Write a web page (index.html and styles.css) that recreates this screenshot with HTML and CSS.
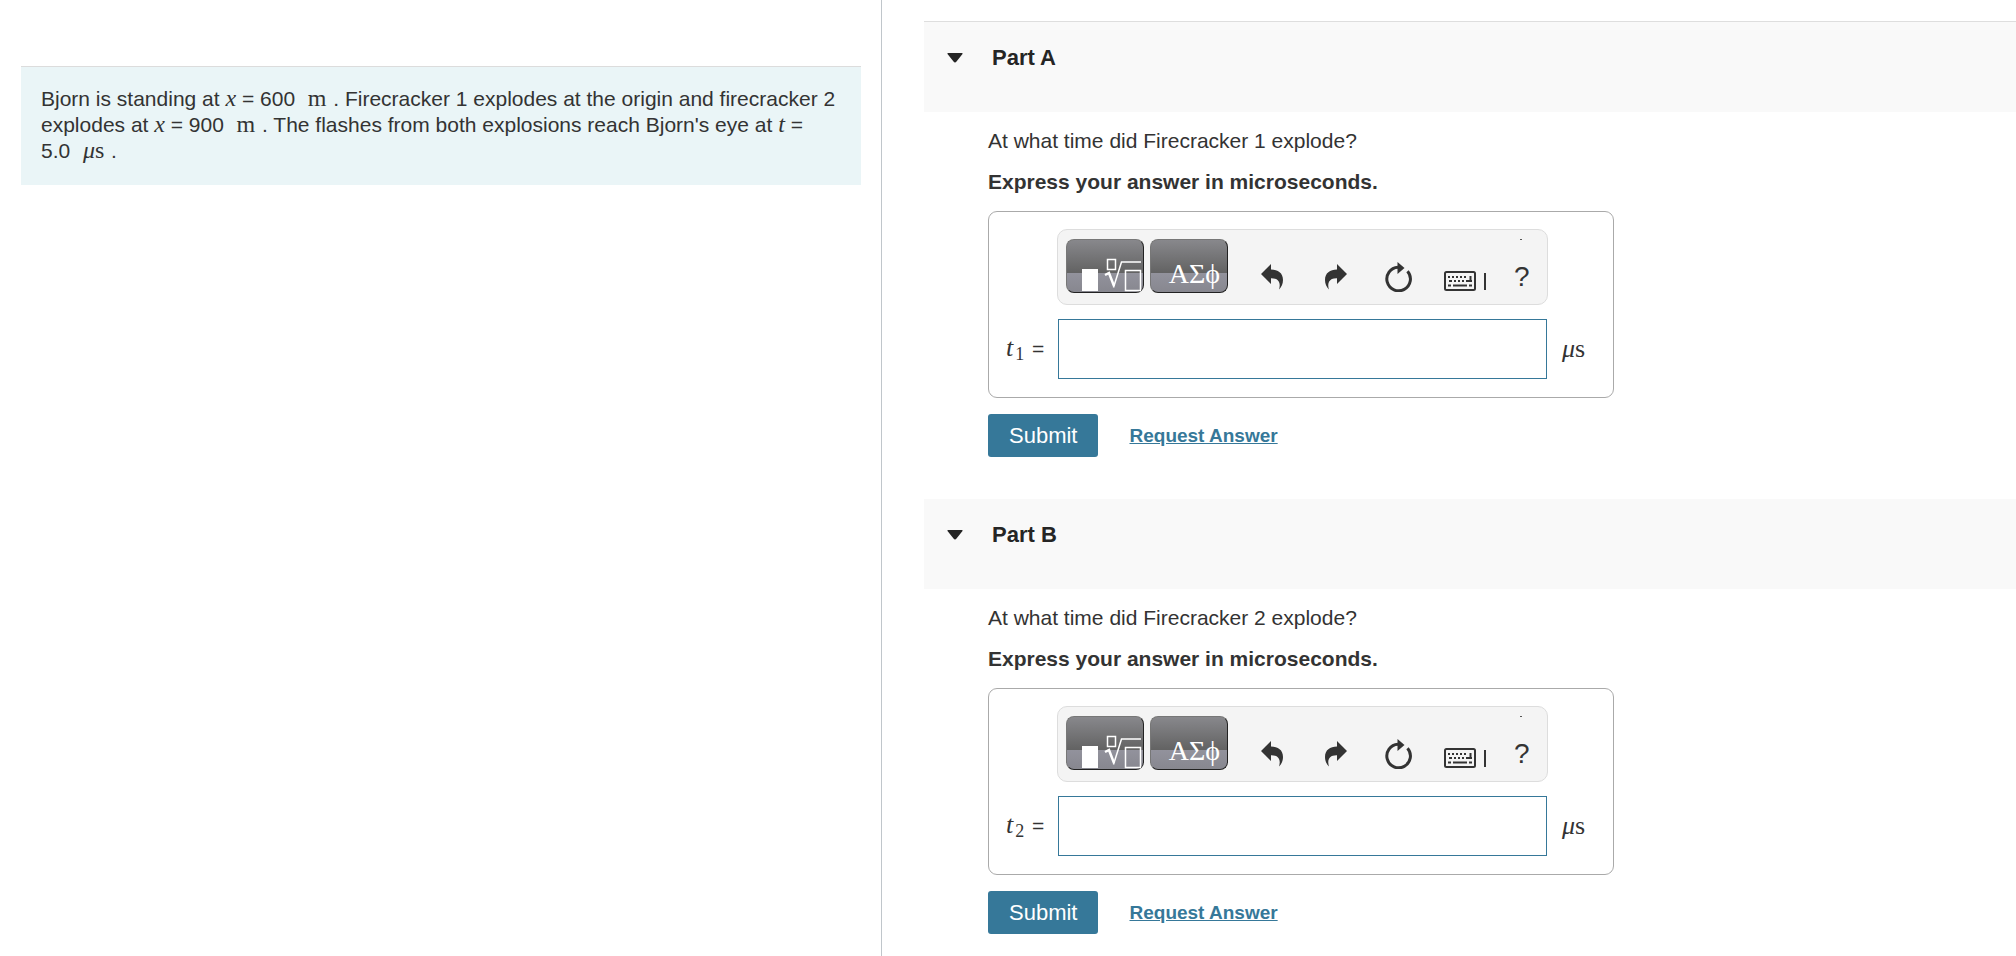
FILE: index.html
```html
<!DOCTYPE html>
<html lang="en">
<head>
<meta charset="utf-8">
<meta name="viewport" content="width=device-width, initial-scale=1">
<title>Firecracker problem</title>
<link rel="stylesheet" href="styles.css">
</head>
<body>
<svg class="defs" width="0" height="0" aria-hidden="true">
  <symbol id="template" viewBox="0 0 60 34">
    <path d="M0 11h16v22H0z" fill="#fff"/>
    <path d="M25.500 1.500h8v10h-8z" fill="none" stroke="#fff" stroke-width="1.500"/>
    <path d="M43.500 12.500h15v20h-15z" fill="none" stroke="#fff" stroke-width="1.500"/>
    <path d="M23 17l4-2 5 13" fill="none" stroke="#fff" stroke-width="2.500"/>
    <path d="M31.500 29.500L39.500 4H59" fill="none" stroke="#fff" stroke-width="1.500"/>
  </symbol>
  <symbol id="undo" viewBox="0 0 22 26">
    <path d="M0 10L10 0v5.500C17 5.500 22 9 22 16c0 4-1.500 7-4 9.500C20 19 18 14 10 14.200V20z" fill="#333"/>
  </symbol>
  <symbol id="reset" viewBox="0 0 28 30">
    <path d="M14 5.200A11.800 11.800 0 1 0 23.500 9.200" fill="none" stroke="#333" stroke-width="3"/>
    <path d="M13.500 0l7 6-7 6z" fill="#333"/>
  </symbol>
  <symbol id="keyboard" viewBox="0 0 32 20">
    <rect x="1" y="1" width="30" height="18" rx="1.500" fill="none" stroke="#333" stroke-width="2"/>
    <path d="M4 6h2m2 0h2m2 0h2m2 0h2m2 0h2M5 10h3m2 0h2m2 0h2m2 0h2m2 0h6M4 14.500h3m2 0h14m2 0h3" fill="none" stroke="#333" stroke-width="2"/>
    <path d="M26.500 5v6" stroke="#333" stroke-width="2"/>
  </symbol>
</svg>
<main class="page">
  <section class="intro" aria-label="Problem">
    <p class="problem">Bjorn is standing at <i class="math">x</i> = 600 &nbsp;<span class="math">m</span> . Firecracker 1 explodes at the origin and firecracker 2 explodes at <i class="math">x</i> = 900 &nbsp;<span class="math">m</span> . The flashes from both explosions reach Bjorn's eye at <i class="math">t</i> = <span class="quantity">5.0 &nbsp;<span class="math"><i>μ</i>s</span> .</span></p>
  </section>
  <div class="parts">
    <section class="part part-first">
      <h2 class="part-head"><button class="toggle" type="button" aria-expanded="true"><svg class="caret" viewBox="0 0 16 10" aria-hidden="true"><path d="M1 0h14q1 0 .5 1L9.500 8.500q-1.500 2-3 0L.5 1Q0 0 1 0z" fill="#252525"/></svg>Part A</button></h2>
      <form class="part-body">
        <p class="question">At what time did Firecracker 1 explode?</p>
        <p class="directions">Express your answer in microseconds.</p>
        <div class="answer">
          <div class="toolbar">
            <button class="palette" type="button" aria-label="Templates"><svg class="template"><use href="#template"/></svg></button>
            <button class="palette greek" type="button">ΑΣϕ</button>
            <div class="tools">
              <button class="tool history" type="button" aria-label="Undo"><svg class="arrow"><use href="#undo"/></svg></button>
              <button class="tool history" type="button" aria-label="Redo"><svg class="arrow flip"><use href="#undo"/></svg></button>
              <button class="tool" type="button" aria-label="Reset"><svg class="reset"><use href="#reset"/></svg></button>
              <button class="tool keys" type="button" aria-label="Keyboard shortcuts"><svg class="keyboard"><use href="#keyboard"/></svg><span class="bar"></span></button>
              <button class="tool help" type="button">?</button>
            </div>
          </div>
          <label class="variable" for="t1"><span class="math"><i>t</i><sub>1</sub></span> =</label>
          <input class="value" id="t1" type="text" autocomplete="off">
          <span class="unit math"><i>μ</i>s</span>
        </div>
        <div class="actions"><button class="submit" type="button">Submit</button><a class="request" href="#t1">Request Answer</a></div>
      </form>
    </section>
    <section class="part">
      <h2 class="part-head"><button class="toggle" type="button" aria-expanded="true"><svg class="caret" viewBox="0 0 16 10" aria-hidden="true"><path d="M1 0h14q1 0 .5 1L9.500 8.500q-1.500 2-3 0L.5 1Q0 0 1 0z" fill="#252525"/></svg>Part B</button></h2>
      <form class="part-body">
        <p class="question">At what time did Firecracker 2 explode?</p>
        <p class="directions">Express your answer in microseconds.</p>
        <div class="answer">
          <div class="toolbar">
            <button class="palette" type="button" aria-label="Templates"><svg class="template"><use href="#template"/></svg></button>
            <button class="palette greek" type="button">ΑΣϕ</button>
            <div class="tools">
              <button class="tool history" type="button" aria-label="Undo"><svg class="arrow"><use href="#undo"/></svg></button>
              <button class="tool history" type="button" aria-label="Redo"><svg class="arrow flip"><use href="#undo"/></svg></button>
              <button class="tool" type="button" aria-label="Reset"><svg class="reset"><use href="#reset"/></svg></button>
              <button class="tool keys" type="button" aria-label="Keyboard shortcuts"><svg class="keyboard"><use href="#keyboard"/></svg><span class="bar"></span></button>
              <button class="tool help" type="button">?</button>
            </div>
          </div>
          <label class="variable" for="t2"><span class="math"><i>t</i><sub>2</sub></span> =</label>
          <input class="value" id="t2" type="text" autocomplete="off">
          <span class="unit math"><i>μ</i>s</span>
        </div>
        <div class="actions"><button class="submit" type="button">Submit</button><a class="request" href="#t2">Request Answer</a></div>
      </form>
    </section>
  </div>
</main>
</body>
</html>
```
FILE: styles.css
```css
* { box-sizing: border-box; }
body {
  margin: 0;
  background: #fff;
  color: #333;
  font: 21px/26px "Liberation Sans", Arial, Helvetica, sans-serif;
}
button, input { font: inherit; color: inherit; }
button { border: 0; padding: 0; background: none; cursor: pointer; }
p, h2 { margin: 0; }
.defs { display: block; position: absolute; }
.page { display: flex; min-height: 100vh; }

.intro {
  flex: 0 0 43.75%;
  padding: 66px 20px 20px 21px;
  border-right: 1px solid #c0c6cb;
}
.problem {
  padding: 19px 20px 21px;
  border-top: 1px solid #dcdcdc;
  background: #eaf5f7;
}
.quantity { white-space: nowrap; }
.math { font: 24px/20px "Liberation Serif", "Times New Roman", serif; }
.problem span.math { padding: 0 1px; }
i.math { font-style: italic; }

.parts { flex: 1; min-width: 0; padding: 21px 0 20px 42px; }
.part + .part { margin-top: 42px; }
.part-head { height: 90px; padding: 23px; background: #f9f9f9; }
.part-first .part-head { height: 91px; border-top: 1px solid #dedede; }
.toggle {
  display: flex;
  align-items: center;
  gap: 29px;
  font-size: 22px;
  font-weight: bold;
  color: #252525;
}
.caret { width: 16px; height: 10px; }
.part-body { padding: 16px 24px 0 64px; }
.directions { margin: 15px 0 16px; font-weight: bold; }

.answer {
  display: grid;
  grid-template-columns: 51px minmax(0, 1fr) 49px;
  row-gap: 14px;
  align-items: center;
  max-width: 626px;
  padding: 17px 16px 18px 17px;
  border: 1px solid #aaa;
  border-radius: 9px;
}
.toolbar {
  grid-column: 2;
  display: flex;
  align-items: flex-start;
  gap: 6px;
  height: 76px;
  padding: 9px 8px;
  border: 1px solid #ddd;
  border-radius: 10px;
  background: #f4f4f4;
}
.palette {
  display: flex;
  justify-content: flex-end;
  align-items: flex-end;
  flex: none;
  width: 78px;
  height: 54px;
  padding: 0 1px 0 0;
  border: 1px solid #777;
  border-right-color: #222;
  border-bottom-color: #222;
  border-radius: 8px;
  background: linear-gradient(#88888c, #626262 64%, #92929c 64%, #87878f);
}
.template { width: 60px; height: 34px; }
.greek {
  padding: 0 7px 2px 0;
  font: 28px/32px "Liberation Serif", "Times New Roman", serif;
  color: #fff;
}
.tools { display: flex; flex: 1; align-items: center; gap: 32px; padding: 22px 0 0 22px; }
.tool { display: flex; align-items: center; justify-content: center; height: 32px; }
.tool svg { display: block; }
.history { padding: 0 5px; }
.arrow { width: 22px; height: 26px; }
.flip { transform: scaleX(-1); }
.reset { width: 28px; height: 30px; }
.keys { gap: 8px; padding-top: 8px; }
.keyboard { width: 32px; height: 20px; }
.bar { width: 2px; height: 17px; background: #333; }
.help { position: relative; margin-left: -4px; font-size: 28px; }
.help::before {
  content: "";
  position: absolute;
  top: -22px;
  left: 6px;
  width: 2px;
  height: 1px;
  background: #555;
}
.variable { grid-column: 1; white-space: nowrap; }
.answer .math { font-size: 26px; }
.variable sub { margin: 0 2px; font-size: 18px; line-height: 0; vertical-align: -4px; }
.value {
  grid-column: 2;
  justify-self: center;
  width: calc(100% - 2px);
  height: 60px;
  padding: 0 12px;
  border: 1px solid #367899;
  border-radius: 0;
  background: #fff;
}
.unit { padding-left: 14px; }

.actions { display: flex; align-items: center; gap: 31px; margin-top: 16px; }
.submit {
  height: 43px;
  padding: 0 21px;
  border-radius: 3px;
  background: #367899;
  color: #fff;
  font-size: 22px;
}
.request { font-size: 19px; font-weight: bold; color: #367899; }
```
